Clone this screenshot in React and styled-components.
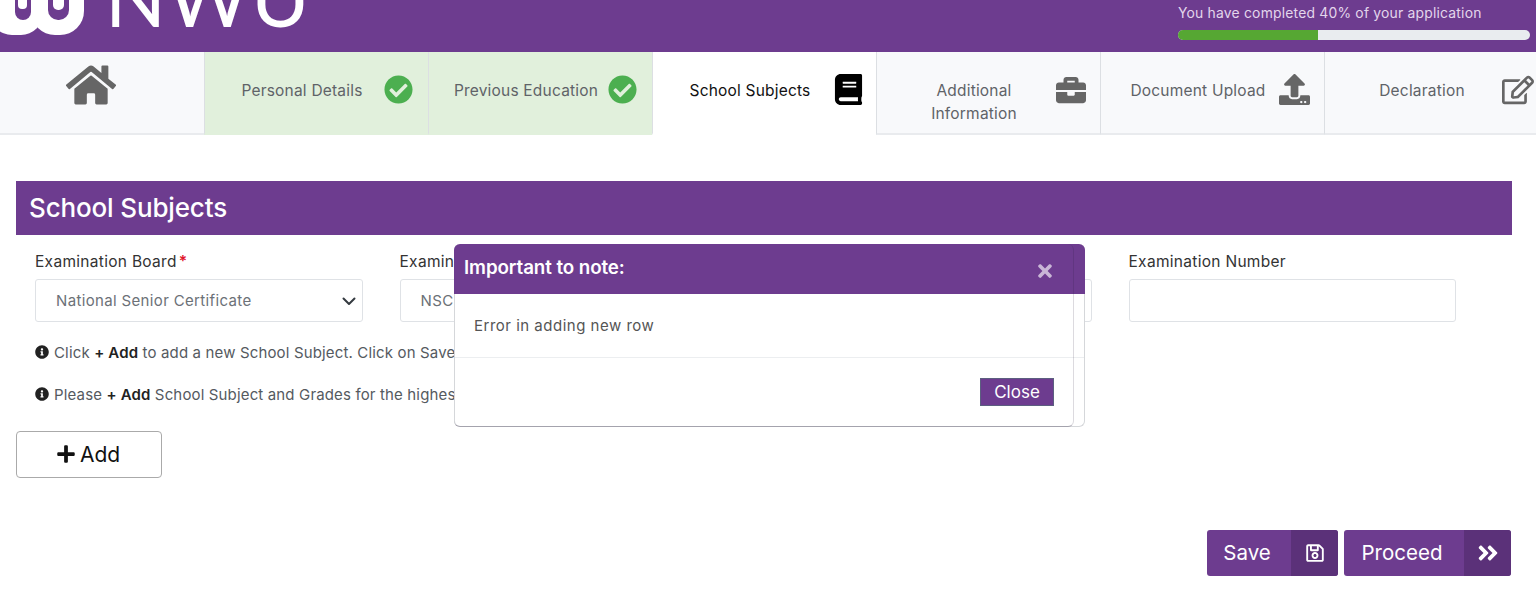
import React from 'react';
import styled, { createGlobalStyle } from 'styled-components';
import {
  FaHome, FaCheckCircle, FaBook, FaBriefcase, FaUpload, FaRegEdit,
  FaInfoCircle, FaPlus, FaRegSave, FaAngleDoubleRight, FaTimes,
} from 'react-icons/fa';

const purple = '#6d3c8f';
const font = 'Inter, "Open Sans", sans-serif';

const Global = createGlobalStyle`
  html, body { margin: 0; padding: 0; background: #fff; }
  body { font-family: ${font}; color: #495057; }
  * { box-sizing: border-box; }
`;

const Page = styled.div`
  position: relative;
  width: 1536px;
  height: 591px;
  overflow: hidden;
`;

const Header = styled.header`
  height: 52px;
  background: ${purple};
  display: flex;
  justify-content: space-between;
  overflow: hidden;
`;

const Logo = styled.div`
  display: flex;
  align-items: flex-start;
  gap: 19px;

  svg { flex: none; }
`;

const LogoText = styled.span`
  font-family: "Lato", sans-serif;
  font-weight: 400;
  font-size: 80px;
  line-height: 54px;
  letter-spacing: 1px;
  color: #fff;
  margin-top: -31px;
`;

const Progress = styled.div`
  width: 352px;
  margin: 5px 6px 0 0;
`;

const ProgressLabel = styled.div`
  font-size: 13.9px;
  line-height: 17px;
  letter-spacing: 0.2px;
  color: #e3d6ec;
`;

const ProgressTrack = styled.div`
  height: 10px;
  margin-top: 8px;
  border-radius: 5px;
  background: #e9ecef;
  overflow: hidden;
`;

const ProgressFill = styled.div`
  height: 100%;
  background: #56a733;
`;

const Tabs = styled.nav`
  display: grid;
  grid-template-columns: 204px repeat(6, 224px);
  height: 83px;
`;

const Tab = styled.div`
  display: grid;
  grid-template-columns: 194px minmax(0, 1fr);
  align-items: start;
  padding: 27px 14px 0 0;
  font-size: 15.5px;
  line-height: 23px;
  letter-spacing: 0.2px;
  text-align: center;
  color: ${p => (p.$active ? '#111' : '#5f6368')};
  background: ${p => (p.$active ? '#fff' : p.$done ? '#e1f0dc' : '#f8f9fb')};
  border-left: 1px solid #dcdfe3;
  border-bottom: 2px solid ${p => (p.$active || p.$done ? 'transparent' : '#e9ebee')};
`;

const HomeTab = styled.div`
  display: flex;
  justify-content: center;
  padding: 8px 22px 0 0;
  background: #f8f9fb;
  border-bottom: 2px solid #e9ebee;
`;

const TabIcon = styled.span`
  display: flex;
  justify-self: end;
  margin-top: ${p => p.$top ?? -5}px;
  margin-right: ${p => p.$right || 0}px;
  font-size: ${p => p.$size || 30}px;
  color: ${p => p.$color || '#666'};
`;

const Content = styled.main`
  padding: 46px 24px 0 16px;
`;

const TitleBar = styled.h1`
  margin: 0;
  height: 54px;
  padding-left: 13px;
  background: ${purple};
  color: #fff;
  font-size: 26px;
  font-weight: 500;
  line-height: 54px;
  letter-spacing: -0.15px;
`;

const FormGrid = styled.div`
  display: grid;
  grid-template-columns: repeat(4, 327.5px);
  column-gap: 37px;
  padding: 17px 0 0 19px;
`;

const Field = styled.div`
  display: flex;
  flex-direction: column;
`;

const Label = styled.label`
  font-size: 15.5px;
  line-height: 20px;
  margin-bottom: 7px;
  letter-spacing: 0.3px;
  color: #333;
  white-space: nowrap;

  b { color: #e0162b; font-weight: 600; margin-left: 2px; }
`;

const Input = styled.div`
  display: flex;
  align-items: center;
  justify-content: space-between;
  height: 43px;
  padding: 0 4px 0 20px;
  border: 1px solid #dfe2e6;
  border-radius: 3px;
  font-size: 15px;
  letter-spacing: 0.35px;
  color: #6c7177;
  background: #fff;
`;

const Note = styled.p`
  display: flex;
  align-items: center;
  gap: 5px;
  margin: 0 0 0 19px;
  height: 20px;
  font-size: 15px;
  letter-spacing: 0.15px;
  color: #555a5f;
  white-space: nowrap;

  svg { color: #222; font-size: 14px; flex: none; }
  strong { color: #222; font-weight: 600; }
  span { white-space: pre; }
`;

const Notes = styled.div`
  display: flex;
  flex-direction: column;
  gap: 22px;
  margin-top: 20px;
`;

const AddButton = styled.button`
  display: flex;
  align-items: center;
  justify-content: center;
  gap: 4px;
  width: 146px;
  height: 47px;
  margin-top: 27px;
  padding: 0 2px 1px 0;
  background: #fff;
  border: 1px solid #aaa;
  border-radius: 4px;
  font-family: ${font};
  font-size: 21px;
  color: #111;

  svg { font-size: 20px; }
`;

const Actions = styled.div`
  display: flex;
  justify-content: flex-end;
  gap: 6px;
  margin-top: 52px;
  padding-right: 1px;
`;

const ActionButton = styled.button`
  display: flex;
  align-items: stretch;
  justify-content: space-between;
  width: ${p => p.$width}px;
  height: 46px;
  padding: 0;
  border: 0;
  border-radius: 3px;
  background: ${purple};
  overflow: hidden;
  font-family: ${font};
  font-size: 20.5px;
  color: #fff;
`;

const ActionLabel = styled.span`
  flex: 1;
  align-self: center;
  text-align: center;
  padding: 0 4px 2px 0;
`;

const ActionIcon = styled.span`
  display: flex;
  align-items: center;
  justify-content: center;
  width: 47px;
  background: #5b3179;
  font-size: ${p => p.$size}px;
`;

const Modal = styled.div`
  position: absolute;
  left: 454px;
  top: 244px;
  width: 631px;
  height: 183px;
  display: flex;
  flex-direction: column;
  background: #fff;
  border: 1px solid #d5d7da;
  border-top: 0;
  border-radius: 6px;

  &::after {
    content: '';
    position: absolute;
    top: 0;
    bottom: -1px;
    left: -1px;
    right: 10px;
    border-right: 1px solid rgba(40, 30, 60, 0.16);
    border-bottom: 1px solid rgba(40, 30, 60, 0.28);
    border-radius: 6px;
    pointer-events: none;
  }
`;

const ModalHead = styled.div`
  display: flex;
  align-items: center;
  justify-content: space-between;
  height: 50px;
  margin: 0 -1px;
  padding: 0 30px 4px 10px;
  background: ${purple};
  border-radius: 6px 6px 0 0;
  color: #fff;
  font-size: 18.8px;
  font-weight: 600;
  letter-spacing: -0.1px;

  svg { color: #c9b6d6; font-size: 20px; margin-top: 8px; }
`;

const ModalBody = styled.div`
  height: 64px;
  padding: 23px 19px 0;
  border-bottom: 1px solid #eceef0;
  font-size: 15px;
  line-height: 18px;
  letter-spacing: 0.5px;
  color: #555;
`;

const ModalFoot = styled.div`
  display: flex;
  justify-content: flex-end;
  padding: 20px 30px 0 0;
`;

const CloseButton = styled.button`
  width: 74px;
  height: 28px;
  padding: 0;
  background: ${purple};
  border: 1px solid #5c5f80;
  font-family: ${font};
  font-size: 17px;
  color: #fff;
`;

const LogoMark = () => (
  <svg width="86" height="37" viewBox="0 0 86 37" fill="#fff">
    <rect x="-10" y="-25" width="53" height="60" rx="22" />
    <rect x="31" y="-25" width="53" height="60" rx="24" />
    <rect x="15" y="-20" width="16" height="40" rx="8" fill={purple} />
    <rect x="48" y="-20" width="21" height="40" rx="10" fill={purple} />
    <rect x="18" y="-20" width="9" height="29" rx="4" />
    <rect x="53" y="-20" width="11" height="30" rx="5" />
  </svg>
);

const Chevron = () => (
  <svg width="18" height="16" viewBox="0 0 18 16" fill="none" stroke="#343a40" strokeWidth="2" strokeLinecap="round" strokeLinejoin="round">
    <path d="M3.5 5.500L9 11l5.500-5.500" />
  </svg>
);

const tabs = [
  { label: 'Personal Details', icon: <FaCheckCircle />, color: '#4caf50', done: true, size: 29, top: -4, right: 1 },
  { label: 'Previous Education', icon: <FaCheckCircle />, color: '#4caf50', done: true, size: 29, top: -4, right: 1 },
  { label: 'School Subjects', icon: <FaBook />, color: '#000', active: true, size: 31, right: -2 },
  { label: <>Additional<br />Information</>, icon: <FaBriefcase />, top: -4 },
  { label: 'Document Upload', icon: <FaUpload />, size: 31 },
  { label: 'Declaration', icon: <FaRegEdit />, size: 32 },
];

export default function App() {
  return (
    <Page>
      <Global />
      <Header>
        <Logo>
          <LogoMark />
          <LogoText>NWU</LogoText>
        </Logo>
        <Progress>
          <ProgressLabel>You have completed 40% of your application</ProgressLabel>
          <ProgressTrack><ProgressFill style={{ width: '39.8%' }} /></ProgressTrack>
        </Progress>
      </Header>

      <Tabs>
        <HomeTab><TabIcon $size={50} $top={0}><FaHome /></TabIcon></HomeTab>
        {tabs.map((t, i) => (
          <Tab key={i} $done={t.done} $active={t.active}>
            <span>{t.label}</span>
            <TabIcon $size={t.size} $color={t.color} $top={t.top} $right={t.right}>{t.icon}</TabIcon>
          </Tab>
        ))}
      </Tabs>

      <Content>
        <TitleBar>School Subjects</TitleBar>
        <FormGrid>
          <Field>
            <Label>Examination Board<b>*</b></Label>
            <Input>National Senior Certificate <Chevron /></Input>
          </Field>
          <Field>
            <Label>Examination Type</Label>
            <Input>NSC</Input>
          </Field>
          <Field>
            <Label>Examination Year</Label>
            <Input />
          </Field>
          <Field>
            <Label>Examination Number</Label>
            <Input />
          </Field>
        </FormGrid>
        <Notes>
          <Note><FaInfoCircle /><span>Click <strong>+ Add</strong> to add a new School Subject. Click on Save</span></Note>
          <Note><FaInfoCircle /><span>Please <strong>+ Add</strong> School Subject and Grades for the highest</span></Note>
        </Notes>
        <AddButton><FaPlus />Add</AddButton>
        <Actions>
          <ActionButton $width={131}><ActionLabel>Save</ActionLabel><ActionIcon $size={20}><FaRegSave /></ActionIcon></ActionButton>
          <ActionButton $width={167}><ActionLabel>Proceed</ActionLabel><ActionIcon $size={24}><FaAngleDoubleRight /></ActionIcon></ActionButton>
        </Actions>
      </Content>

      <Modal>
        <ModalHead>Important to note:<FaTimes /></ModalHead>
        <ModalBody>Error in adding new row</ModalBody>
        <ModalFoot><CloseButton>Close</CloseButton></ModalFoot>
      </Modal>
    </Page>
  );
}
